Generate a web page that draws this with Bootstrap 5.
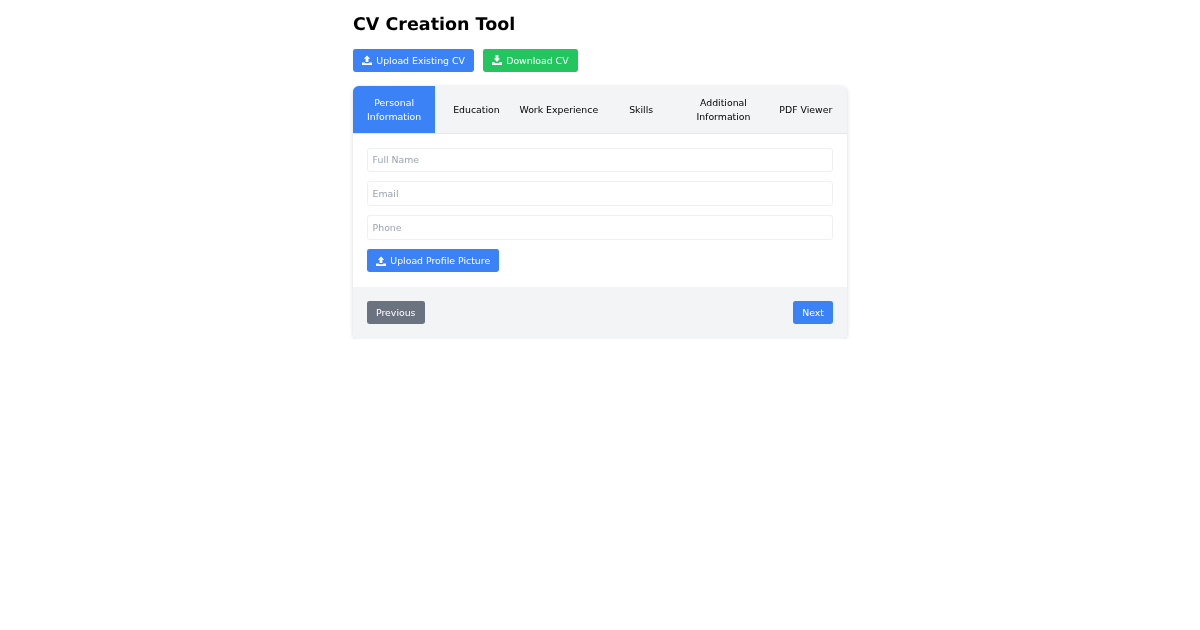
<!DOCTYPE html>
<html lang="en">
<head>
<meta charset="utf-8">
<title>CV Creation Tool</title>
<link href="https://cdn.jsdelivr.net/npm/bootstrap@5.3.0/dist/css/bootstrap.min.css" rel="stylesheet">
<style>
body { font-family: "DejaVu Sans", sans-serif; background: #fff; color: #000; font-size: 9.35px; text-rendering: geometricPrecision; }
.cv-wrap { width: 494px; margin: 0 auto; padding-top: 15px; will-change: transform; }
.cv-title { font-size: 17.5px; line-height: 21px; font-weight: 700; margin: 0 0 12.6px; color: #000; }
.cv-btn { display: inline-flex; align-items: center; height: 23.4px; padding: 0 9px; font-size: 9.35px; line-height: 1; border: 0; border-radius: 2.4px; color: #fff; white-space: nowrap; }
.cv-btn:hover, .cv-btn:active { color: #fff; }
.cv-btn svg { width: 10px; height: 10px; margin-right: 4.3px; fill: #fff; flex: none; }
.cv-blue, .cv-blue:hover { background: #3b82f6; }
.cv-green, .cv-green:hover { background: #22c55e; }
.cv-gray, .cv-gray:hover { background: #6b7280; }
.cv-actions { gap: 9px; margin-bottom: 14px; }
.cv-panel { border-radius: 5.6px; box-shadow: 0 1px 4px rgba(0,0,0,.14), 0 0 2px rgba(0,0,0,.05); overflow: hidden; background: #fff; }
.cv-tabs { background: #f3f4f6; border-bottom: 1px solid #e5e7eb; height: 47.6px; }
.cv-tab { flex: 1 1 0; min-width: 0; height: 46.6px; padding: 1px 0 0; border: 0; background: transparent; color: #000; font-size: 9.35px; line-height: 14px; text-align: center; }
.cv-tab.cv-on { background: #3b82f6; color: #fff; }
.cv-body { padding: 14px 14px 14.3px; }
.cv-input { display: block; width: 100%; height: 24.4px; padding: 0 4.6px; margin-bottom: 9.4px; font-size: 9.35px; color: #000; border: 1px solid #eef0f2; border-radius: 2.8px; box-shadow: none; }
.cv-input::placeholder { color: #9ca3af; opacity: 1; }
.cv-foot { background: #f3f4f6; padding: 14px 14px 14.6px; }
</style>
</head>
<body>
<main class="cv-wrap">
  <h1 class="cv-title">CV Creation Tool</h1>
  <div class="d-flex cv-actions">
    <button type="button" class="btn cv-btn cv-blue"><svg viewBox="0 0 10 10"><path d="M5 .5 8.2 3.7H6.4V7H3.6V3.7H1.8zM0 7.6h2.8v.6h4.4v-.6H10V10H0z"/></svg>Upload Existing CV</button>
    <button type="button" class="btn cv-btn cv-green"><svg viewBox="0 0 10 10"><path d="M3.6 0h2.8v3.4h1.8L5 6.9 1.8 3.4h1.8zM0 7.2h2.4l1 1h3.2l1-1H10V10H0z"/></svg>Download CV</button>
  </div>
  <section class="cv-panel">
    <nav class="d-flex cv-tabs">
      <button type="button" class="cv-tab cv-on">Personal Information</button>
      <button type="button" class="cv-tab">Education</button>
      <button type="button" class="cv-tab">Work Experience</button>
      <button type="button" class="cv-tab">Skills</button>
      <button type="button" class="cv-tab">Additional Information</button>
      <button type="button" class="cv-tab">PDF Viewer</button>
    </nav>
    <div class="cv-body">
      <input class="form-control cv-input" type="text" placeholder="Full Name">
      <input class="form-control cv-input" type="email" placeholder="Email">
      <input class="form-control cv-input" type="tel" placeholder="Phone">
      <button type="button" class="btn cv-btn cv-blue d-flex"><svg viewBox="0 0 10 10"><path d="M5 .5 8.2 3.7H6.4V7H3.6V3.7H1.8zM0 7.6h2.8v.6h4.4v-.6H10V10H0z"/></svg>Upload Profile Picture</button>
    </div>
    <div class="d-flex justify-content-between cv-foot">
      <button type="button" class="btn cv-btn cv-gray">Previous</button>
      <button type="button" class="btn cv-btn cv-blue">Next</button>
    </div>
  </section>
</main>
<script src="https://cdn.jsdelivr.net/npm/bootstrap@5.3.0/dist/js/bootstrap.bundle.min.js"></script>
</body>
</html>
